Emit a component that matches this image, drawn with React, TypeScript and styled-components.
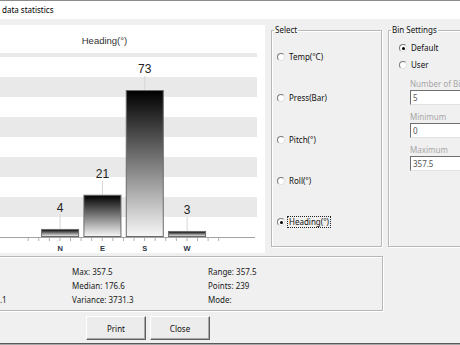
import React from 'react';
import styled, { createGlobalStyle } from 'styled-components';

const GlobalStyle = createGlobalStyle`
  html, body {
    margin: 0;
    padding: 0;
    background: #f0f0f0;
    overflow: hidden;
  }
`;

const UI_FONT = `"Noto Sans", "Open Sans", sans-serif`;
const CHART_FONT = `"Liberation Sans", Arial, sans-serif`;

type Bar = { label: string; value: number };

const bars: Bar[] = [
  { label: 'N', value: 4 },
  { label: 'E', value: 21 },
  { label: 'S', value: 73 },
  { label: 'W', value: 3 },
];

const channels = ['Temp(°C)', 'Press(Bar)', 'Pitch(°)', 'Roll(°)', 'Heading(°)'];

const stats = [
  ['Min: 0.0', 'Max: 357.5', 'Range: 357.5'],
  ['Mean: 176.3', 'Median: 176.6', 'Points: 239'],
  ['Deviation: 61.1', 'Variance: 3731.3', 'Mode:'],
];

const binFields = [
  { label: 'Number of Bins', value: '5' },
  { label: 'Minimum', value: '0' },
  { label: 'Maximum', value: '357.5' },
];

// plot geometry, in page x and plot-local y
const AXIS_Y = 184;
const SCALE = 147 / 73;
const FIRST_CENTER = 60.1;
const STEP = 42.33;
const BAR_W = 38;

const HistogramPlot: React.FC<{ data: Bar[] }> = ({ data }) => {
  const ticks = Array.from({ length: 19 }, (_, i) => 28.2 + i * (STEP / 4));
  const stripes = Array.from({ length: 5 }, (_, i) => -16 + i * 40);

  return (
    <svg width={321} height={200} viewBox="-56 0 321 200">
      <defs>
        <linearGradient id="barFill" x1="0" y1="0" x2="0" y2="1">
          <stop offset="0" stopColor="#000" />
          <stop offset="1" stopColor="#f7f7f7" />
        </linearGradient>
      </defs>
      {stripes.map((y) => (
        <rect key={y} x={-56} y={y} width={313} height={20} fill="#e9e9e9" />
      ))}
      <line x1={-56} y1={AXIS_Y + 0.5} x2={255} y2={AXIS_Y + 0.5} stroke="#a3a3a3" />
      {ticks.map((x) => (
        <line key={x} x1={x} y1={AXIS_Y + 1} x2={x} y2={AXIS_Y + 4} stroke="#b0b0b0" />
      ))}
      {data.map((b, i) => {
        const cx = FIRST_CENTER + i * STEP;
        const h = b.value * SCALE;
        const top = AXIS_Y - h;
        return (
          <g key={b.label}>
            <line x1={cx} y1={top - 14} x2={cx} y2={top} stroke="#d6d6d6" />
            <rect
              x={cx - BAR_W / 2 + 0.5}
              y={top + 0.5}
              width={BAR_W - 1}
              height={Math.max(h - 1, 1)}
              fill="url(#barFill)"
              stroke="#6b6b6b"
            />
            <text
              x={cx}
              y={top - 17}
              textAnchor="middle"
              fontFamily={CHART_FONT}
              fontSize={12}
              fill="#222"
            >
              {b.value}
            </text>
            <text
              x={cx}
              y={AXIS_Y + 14}
              textAnchor="middle"
              fontFamily={CHART_FONT}
              fontSize={7.5}
              fontWeight={700}
              fill="#2b3448"
            >
              {b.label}
            </text>
          </g>
        );
      })}
    </svg>
  );
};

const App: React.FC = () => {
  return (
    <>
      <GlobalStyle />
      <Window>
        <TopEdge />
        <TitleBar>data statistics</TitleBar>
        <Content>
          <TopRow>
            <ChartPanel>
              <ChartTitle>Heading(°)</ChartTitle>
              <HistogramPlot data={bars} />
            </ChartPanel>
            <SelectGroup>
              <Legend>Select</Legend>
              <RadioList>
                {channels.map((c) => (
                  <RadioRow key={c}>
                    <Radio $checked={c === 'Heading(°)'} />
                    <RadioText $focused={c === 'Heading(°)'}>{c}</RadioText>
                  </RadioRow>
                ))}
              </RadioList>
            </SelectGroup>
            <BinGroup>
              <Legend>Bin Settings</Legend>
              <BinBody>
                <RadioRow>
                  <Radio $checked />
                  <RadioText>Default</RadioText>
                </RadioRow>
                <RadioRow>
                  <Radio />
                  <RadioText>User</RadioText>
                </RadioRow>
                <Fields>
                  {binFields.map((f) => (
                    <Field key={f.label}>
                      <FieldLabel>{f.label}</FieldLabel>
                      <TextBox>{f.value}</TextBox>
                    </Field>
                  ))}
                </Fields>
              </BinBody>
            </BinGroup>
          </TopRow>
          <StatsBox>
            {stats.map((row) =>
              row.map((cell) => <StatCell key={cell}>{cell}</StatCell>)
            )}
          </StatsBox>
          <ButtonRow>
            <Button>Print</Button>
            <Button>Close</Button>
          </ButtonRow>
        </Content>
        <BottomEdge />
      </Window>
    </>
  );
};

export default App;

const Window = styled.div`
  width: 460px;
  height: 345px;
  display: flex;
  flex-direction: column;
  overflow: hidden;
  background: #f0f0f0;
  font-family: ${UI_FONT};
  color: #111;
`;

const TopEdge = styled.div`
  height: 1px;
  background: #8c8c8c;
`;

const TitleBar = styled.div`
  height: 18px;
  background: #fff;
  font-size: 8px;
  line-height: 18px;
  padding-left: 2px;
  color: #000;
`;

const Content = styled.div`
  flex: 1;
  display: flex;
  flex-direction: column;
  margin-left: -56px;
  padding-top: 6px;
`;

const TopRow = styled.div`
  display: flex;
  align-items: flex-start;
  gap: 6px;

  & > * {
    flex-shrink: 0;
  }
`;

const ChartPanel = styled.div`
  width: 321px;
  height: 228px;
  background: #fff;
  display: flex;
  flex-direction: column;

  & svg {
    display: block;
  }
`;

const ChartTitle = styled.div`
  height: 28px;
  box-sizing: border-box;
  padding-top: 10px;
  text-align: center;
  font-family: ${CHART_FONT};
  font-size: 9.5px;
  line-height: 12px;
  color: #333;
`;

const Group = styled.fieldset`
  margin: 0;
  padding: 0;
  box-sizing: border-box;
  height: 222px;
  border: 1px solid #b8b8b8;
  box-shadow: inset 1px 1px 0 #fff, 1px 1px 0 #fff;
  min-width: 0;
`;

const SelectGroup = styled(Group)`
  width: 111px;
`;

const BinGroup = styled(Group)`
  width: 90px;
`;

const Legend = styled.legend`
  margin-left: 2px;
  padding: 0 1px;
  font-size: 8px;
  line-height: 10px;
  color: #111;
`;

const RadioList = styled.div`
  display: flex;
  flex-direction: column;
  gap: 29.3px;
  padding: 16px 0 0 5px;
`;

const RadioRow = styled.div`
  display: flex;
  align-items: center;
  height: 12px;
  gap: 3px;
`;

const Radio = styled.span<{ $checked?: boolean }>`
  width: 8px;
  height: 8px;
  box-sizing: border-box;
  border-radius: 50%;
  border: 1px solid;
  border-color: #7c7c7c #e2e2e2 #e2e2e2 #7c7c7c;
  background: #fff;
  display: flex;
  align-items: center;
  justify-content: center;

  &::after {
    content: '';
    width: 3px;
    height: 3px;
    border-radius: 50%;
    background: ${(p) => (p.$checked ? '#000' : 'transparent')};
  }
`;

const RadioText = styled.span<{ $focused?: boolean }>`
  font-size: 8px;
  line-height: 10px;
  padding: 0 1px;
  outline: ${(p) => (p.$focused ? '1px dotted #222' : 'none')};
`;

const BinBody = styled.div`
  display: flex;
  flex-direction: column;
  gap: 5px;
  padding: 7px 0 0 10px;
`;

const Fields = styled.div`
  display: flex;
  flex-direction: column;
  gap: 6px;
  padding: 2px 0 0 11px;
`;

const Field = styled.div`
  display: flex;
  flex-direction: column;
  gap: 1px;
`;

const FieldLabel = styled.div`
  font-size: 8px;
  line-height: 11px;
  color: #a6a6a6;
  white-space: nowrap;
`;

const TextBox = styled.div`
  width: 70px;
  height: 15px;
  box-sizing: border-box;
  background: #fff;
  border: 1px solid;
  border-color: #6f6f6f #e3e3e3 #e3e3e3 #6f6f6f;
  padding-left: 2px;
  font-size: 8px;
  line-height: 13px;
  color: #555;
`;

const StatsBox = styled.div`
  margin-top: 3px;
  width: 439px;
  height: 55px;
  box-sizing: border-box;
  border: 1px solid #b8b8b8;
  box-shadow: inset 1px 1px 0 #fff, 1px 1px 0 #fff;
  display: grid;
  grid-template-columns: 121px 136px 1fr;
  grid-auto-rows: 14px;
  align-items: center;
  padding: 8px 0 0 6px;
`;

const StatCell = styled.div`
  font-size: 8px;
  line-height: 14px;
  white-space: nowrap;
  color: #1a1a1a;
`;

const ButtonRow = styled.div`
  display: flex;
  gap: 4px;
  margin-top: 5px;
  padding-left: 142px;
`;

const Button = styled.button`
  width: 60px;
  height: 24px;
  padding: 0;
  font-family: ${UI_FONT};
  font-size: 8px;
  color: #111;
  background: #ececec;
  border: 1px solid;
  border-color: #fff #5f5f5f #5f5f5f #fff;
  box-shadow: inset -1px -1px 0 #a8a8a8;
`;

const BottomEdge = styled.div`
  height: 2px;
  border-top: 1px solid #5a5a5a;
  background: #a8a8a8;
  box-sizing: border-box;
`;
